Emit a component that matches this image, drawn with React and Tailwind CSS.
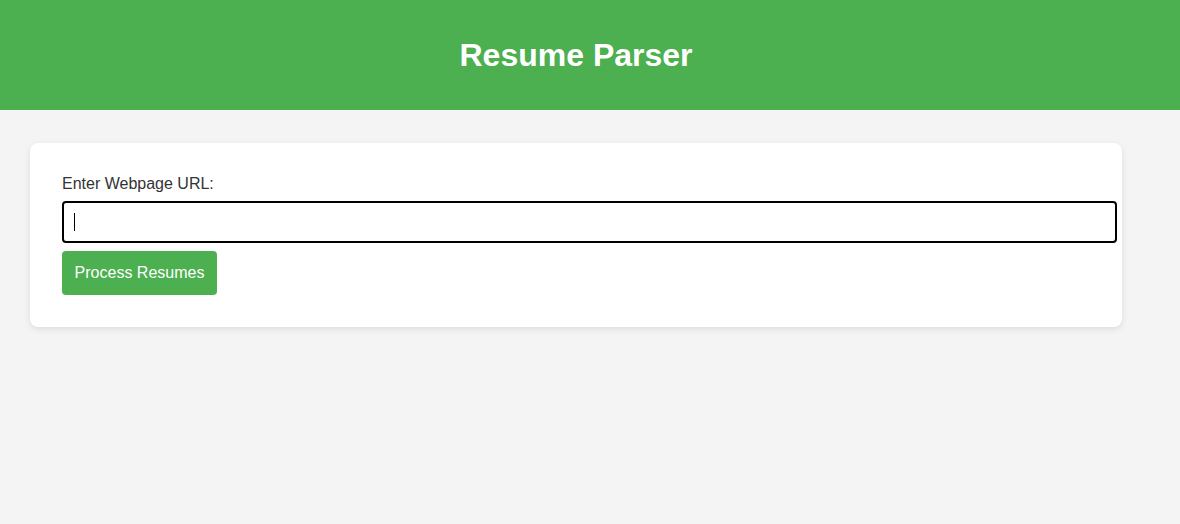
import { useState } from "react";

export default function App() {
  const [url, setUrl] = useState("");

  return (
    <div className="min-h-screen bg-[#f4f4f4] font-['Liberation_Sans',Arial,sans-serif] text-[#333]">
      <header className="bg-[#4caf50] h-[110px] flex items-center justify-center pr-[28px]">
        <h1 className="text-white text-[32px] font-bold leading-none">Resume Parser</h1>
      </header>

      <div className="w-[1152px] px-[30px] pt-[33px]">
        <div className="bg-white rounded-lg shadow-[0_2px_6px_rgba(0,0,0,0.1)] pl-8 pr-8 pt-8 pb-8">
          <label className="block text-base leading-[18px] text-[#333] mb-2">Enter Webpage URL:</label>
          <div className="relative w-[1055px]">
            <input
              type="text"
              autoFocus
              value={url}
              onChange={(e) => setUrl(e.target.value)}
              className="block w-full h-[42px] px-[10px] border-2 border-black rounded-[4px] text-base outline-none bg-white"
            />
            {url === "" && (
              <span className="pointer-events-none absolute left-[12px] top-[12px] w-px h-[18px] bg-black" />
            )}
          </div>
          <button className="mt-2 bg-[#4caf50] text-white text-base leading-5 px-3 py-3 rounded-[4px] w-[155px]">
            Process Resumes
          </button>
        </div>
      </div>
    </div>
  );
}
